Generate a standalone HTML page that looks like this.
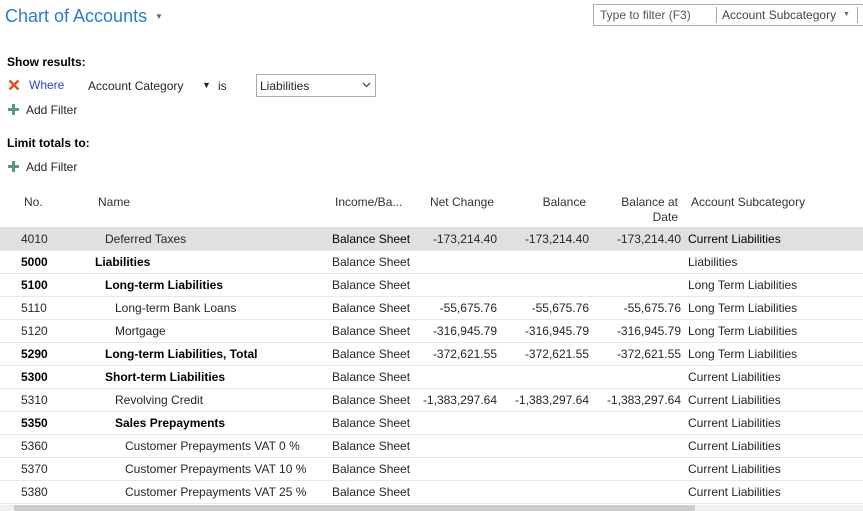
<!DOCTYPE html>
<html><head><style>
body{margin:0;width:863px;height:511px;overflow:hidden;background:#fff;font-family:"Liberation Sans",sans-serif;font-size:12px;color:#262626;position:relative}
.a{position:absolute;white-space:nowrap}
.r{position:absolute;left:0;width:863px;height:22px;border-bottom:1px solid #e8e8e8}
.r span{position:absolute;top:4px;white-space:nowrap}
.b{font-weight:bold;color:#000}
.n{text-align:right;width:100px}
.hl{background:#e0e0e0}
.plus{position:absolute;width:11px;height:11px}
.plus:before{content:"";position:absolute;left:4px;top:0;width:3px;height:11px;background:#5a9a78}
.plus:after{content:"";position:absolute;left:0;top:4px;width:11px;height:3px;background:#5a9a78}
</style></head><body>
<div class="a" style="left:5px;top:6px;font-size:18px;color:#2b7bd2">Chart of Accounts</div>
<div class="a" style="left:155px;top:12px;font-size:8px;color:#666">▼</div>
<div class="a" style="left:593px;top:4px;width:270px;height:22px;border:1px solid #aaa;border-right:none;box-sizing:border-box"></div>
<div class="a" style="left:600px;top:8px;color:#555">Type to filter (F3)</div>
<div class="a" style="left:716px;top:7px;width:1px;height:16px;background:#aaa"></div>
<div class="a" style="left:722px;top:8px;color:#444">Account Subcategory</div>
<div class="a" style="left:843px;top:11px;font-size:7px;color:#666">▼</div>
<div class="a" style="left:857px;top:7px;width:1px;height:16px;background:#aaa"></div>

<div class="a b" style="left:7px;top:55px">Show results:</div>
<svg class="a" style="left:8px;top:79px" width="12" height="12"><path d="M1.5 1.5L10.5 10.5M10.5 1.5L1.5 10.5" stroke="#e0502b" stroke-width="2.6"/></svg>
<div class="a" style="left:29px;top:78px;color:#2b3fd6">Where</div>
<div class="a" style="left:88px;top:79px">Account Category</div>
<div class="a" style="left:202px;top:80px;font-size:9px">▼</div>
<div class="a" style="left:218px;top:79px">is</div>
<div class="a" style="left:256px;top:74px;width:120px;height:23px;border:1px solid #aaa;box-sizing:border-box"></div>
<div class="a" style="left:260px;top:79px">Liabilities</div>
<svg class="a" style="left:362px;top:82px" width="9" height="6"><path d="M1 1L4.5 4.5L8 1" stroke="#555" stroke-width="1.4" fill="none"/></svg>
<div class="plus" style="left:8px;top:104px"></div>
<div class="a" style="left:26px;top:103px">Add Filter</div>
<div class="a b" style="left:7px;top:136px">Limit totals to:</div>
<div class="plus" style="left:8px;top:161px"></div>
<div class="a" style="left:26px;top:160px">Add Filter</div>

<div class="a" style="left:24px;top:195px;color:#333">No.</div>
<div class="a" style="left:98px;top:195px;color:#333">Name</div>
<div class="a" style="left:335px;top:195px;color:#333">Income/Ba...</div>
<div class="a" style="left:394px;top:195px;width:100px;text-align:right;color:#333">Net Change</div>
<div class="a" style="left:486px;top:195px;width:100px;text-align:right;color:#333">Balance</div>
<div class="a" style="left:578px;top:195px;width:100px;text-align:right;color:#333;line-height:15px">Balance at<br>Date</div>
<div class="a" style="left:691px;top:195px;color:#333">Account Subcategory</div>
<div class="a" style="left:0;top:227px;width:863px;height:1px;background:#e0e0e0"></div>

<div class="r hl" style="top:228px"><span style="left:21px">4010</span><span style="left:105px">Deferred Taxes</span><span style="left:332px;color:#000">Balance Sheet</span><span class="n" style="left:397px">-173,214.40</span><span class="n" style="left:489px">-173,214.40</span><span class="n" style="left:581px">-173,214.40</span><span style="left:688px;color:#000">Current Liabilities</span></div>
<div class="r" style="top:251px"><span class="b" style="left:21px">5000</span><span class="b" style="left:95px">Liabilities</span><span style="left:332px">Balance Sheet</span><span style="left:688px">Liabilities</span></div>
<div class="r" style="top:274px"><span class="b" style="left:21px">5100</span><span class="b" style="left:105px">Long-term Liabilities</span><span style="left:332px">Balance Sheet</span><span style="left:688px">Long Term Liabilities</span></div>
<div class="r" style="top:297px"><span style="left:21px">5110</span><span style="left:115px">Long-term Bank Loans</span><span style="left:332px">Balance Sheet</span><span class="n" style="left:397px">-55,675.76</span><span class="n" style="left:489px">-55,675.76</span><span class="n" style="left:581px">-55,675.76</span><span style="left:688px">Long Term Liabilities</span></div>
<div class="r" style="top:320px"><span style="left:21px">5120</span><span style="left:115px">Mortgage</span><span style="left:332px">Balance Sheet</span><span class="n" style="left:397px">-316,945.79</span><span class="n" style="left:489px">-316,945.79</span><span class="n" style="left:581px">-316,945.79</span><span style="left:688px">Long Term Liabilities</span></div>
<div class="r" style="top:343px"><span class="b" style="left:21px">5290</span><span class="b" style="left:105px">Long-term Liabilities, Total</span><span style="left:332px">Balance Sheet</span><span class="n" style="left:397px">-372,621.55</span><span class="n" style="left:489px">-372,621.55</span><span class="n" style="left:581px">-372,621.55</span><span style="left:688px">Long Term Liabilities</span></div>
<div class="r" style="top:366px"><span class="b" style="left:21px">5300</span><span class="b" style="left:105px">Short-term Liabilities</span><span style="left:332px">Balance Sheet</span><span style="left:688px">Current Liabilities</span></div>
<div class="r" style="top:389px"><span style="left:21px">5310</span><span style="left:115px">Revolving Credit</span><span style="left:332px">Balance Sheet</span><span class="n" style="left:397px">-1,383,297.64</span><span class="n" style="left:489px">-1,383,297.64</span><span class="n" style="left:581px">-1,383,297.64</span><span style="left:688px">Current Liabilities</span></div>
<div class="r" style="top:412px"><span class="b" style="left:21px">5350</span><span class="b" style="left:115px">Sales Prepayments</span><span style="left:332px">Balance Sheet</span><span style="left:688px">Current Liabilities</span></div>
<div class="r" style="top:435px"><span style="left:21px">5360</span><span style="left:125px">Customer Prepayments VAT 0 %</span><span style="left:332px">Balance Sheet</span><span style="left:688px">Current Liabilities</span></div>
<div class="r" style="top:458px"><span style="left:21px">5370</span><span style="left:125px">Customer Prepayments VAT 10 %</span><span style="left:332px">Balance Sheet</span><span style="left:688px">Current Liabilities</span></div>
<div class="r" style="top:481px"><span style="left:21px">5380</span><span style="left:125px">Customer Prepayments VAT 25 %</span><span style="left:332px">Balance Sheet</span><span style="left:688px">Current Liabilities</span></div>
<div class="a" style="left:0;top:505px;width:863px;height:6px;background:#f0f0f0"></div>
<div class="a" style="left:14px;top:505px;width:681px;height:6px;background:#cdcdcd"></div>
</body></html>
